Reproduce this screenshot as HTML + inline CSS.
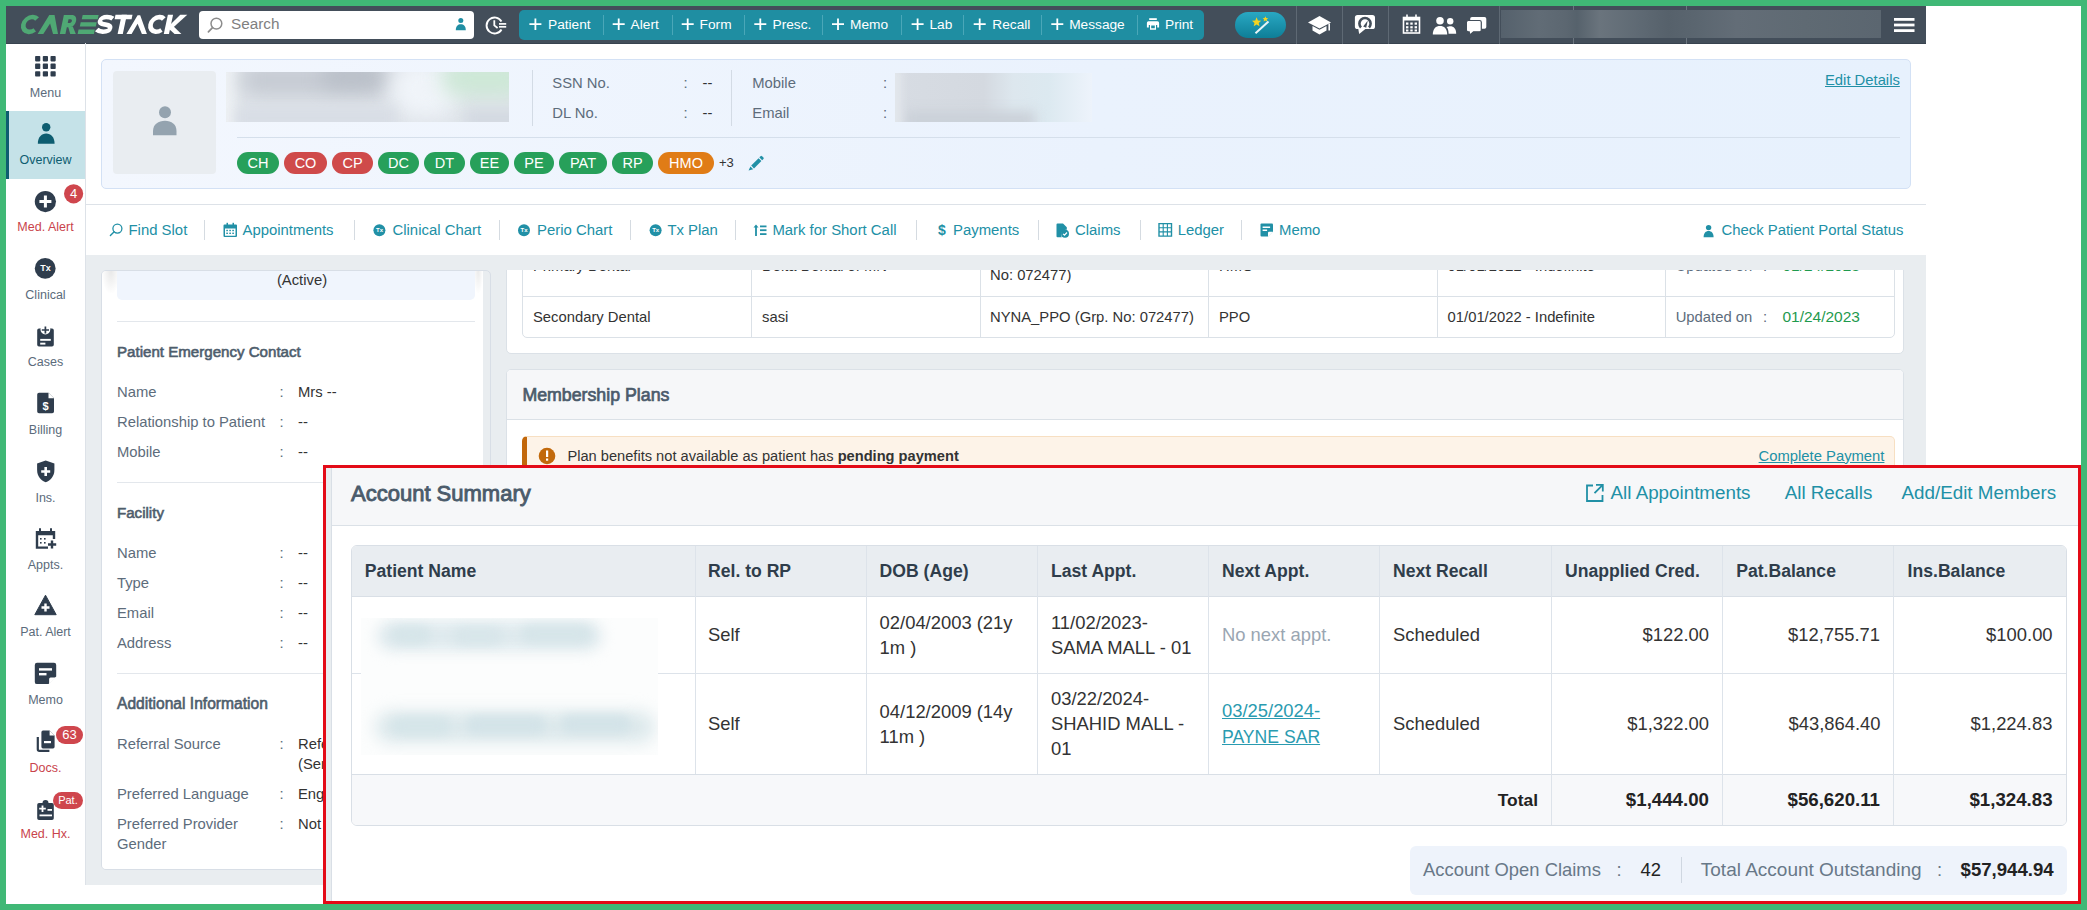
<!DOCTYPE html>
<html><head><meta charset="utf-8">
<style>
*{box-sizing:border-box;margin:0;padding:0}
html,body{width:2087px;height:910px;overflow:hidden}
body{position:relative;background:#40b876;font-family:"Liberation Sans",sans-serif;color:#333}
.a{position:absolute}
.t{position:absolute;white-space:nowrap;line-height:20px}
svg{position:absolute;overflow:visible}
#inner{left:6px;top:6px;width:2075px;height:898px;background:#fff}
#nav{left:6px;top:6px;width:1920px;height:38px;background:#434e5a;border-bottom:1px solid #38434f}
.vsep{position:absolute;width:1px;background:#5f6a75}
.nb{position:absolute;color:#fff;font-size:13.7px;line-height:20px;top:15px}
.bsep{position:absolute;top:15px;width:1px;height:20px;background:#4aa7b8}
.sl{position:absolute;left:6px;width:79px;text-align:center;font-size:12.5px;line-height:16px;color:#5b6b7b}
.red{color:#c9434b}
.pl{color:#5d6c7b;font-size:14.8px}
.pv{color:#333;font-size:14.8px}
.badge{position:absolute;top:152px;height:22px;border-radius:11px;color:#fff;font-size:14.5px;line-height:22px;text-align:center}
.g{background:#27a05a}.r{background:#cf4a4a}.o{background:#e07c16}
.tab{position:absolute;top:220px;font-size:14.9px;line-height:20px;color:#2190a6}
.tsep{position:absolute;top:220px;width:1px;height:20px;background:#d5dbe1}
.card{position:absolute;background:#fff;border:1px solid #d9dfe6;border-radius:4px}
.it{color:#333;font-size:14.8px}
.hd{font-weight:700;color:#2f3d4b;font-size:17.6px}
.cv{font-size:18.4px;color:#333}
.vl{position:absolute;width:1px;background:#dde3ea}
.hl{position:absolute;height:1px;background:#dde3ea}
</style></head><body>
<div class="a" id="inner"></div>
<!-- NAV -->
<div class="a" id="nav"></div>

<!-- logo -->
<svg class="a" style="left:0;top:0" width="200" height="45" viewBox="0 0 200 45">
<g transform="matrix(1,0,-0.2126,1,7.23,0)">
 <path d="M33.9,19.0 A7.45,7.45 0 1 0 33.9,29.9" fill="none" stroke="#4fa874" stroke-width="4.6"/>
 <path d="M37.6,33.9 L45.2,14.9 L50.5,14.9 L58,33.9 L53,33.9 L47.9,23.6 L43.3,33.9 Z" fill="#4fa874"/>
 <path d="M59.8,33.9 V14.9 H67.6 C71.4,14.9 73.3,17.6 73.3,21.1 C73.3,24.6 71.3,27.3 67.6,27.3 H65.4 V33.9 Z" fill="#4fa874"/>
 <path d="M65.4,19.3 H67.4 C68.6,19.3 69.1,20.1 69.1,21.1 C69.1,22.2 68.6,23.0 67.4,23.0 H65.4 Z" fill="#434e5a"/>
 <path d="M66.5,26.5 L71.2,26.5 L75.8,33.9 L70.2,33.9 Z" fill="#4fa874"/>
 <rect x="78.6" y="14.9" width="16" height="4.3" fill="#4fa874"/>
 <rect x="78.2" y="22.2" width="16" height="4.3" fill="#4fa874"/>
 <rect x="77.6" y="29.6" width="16.3" height="4.3" fill="#4fa874"/>
 <path d="M109.6,18.6 C107.6,17.5 105.5,17.1 103,17.1 C99.5,17.1 97.2,18.6 97.2,20.9 C97.2,23.5 100,24 103,24.4 C106.5,24.9 108.9,25.6 108.9,28.1 C108.9,30.6 106.5,31.8 102.6,31.8 C100,31.8 97.8,31.2 95.8,29.6" fill="none" stroke="#fff" stroke-width="4.5"/>
 <rect x="111.4" y="14.8" width="17" height="4.4" fill="#fff"/>
 <rect x="117.6" y="14.8" width="5.2" height="19.2" fill="#fff"/>
 <path d="M126.4,34 L133.6,15.2 L136.2,15.2 L146.9,34 L141.9,34 L135.4,23.8 L131.6,34 Z" fill="#fff"/>
 <path d="M160.6,18.9 A7.3,7.3 0 1 0 160.6,30.0" fill="none" stroke="#fff" stroke-width="4.6"/>
 <rect x="163.8" y="14.8" width="5.2" height="19.3" fill="#fff"/>
 <path d="M168.2,24.8 L176.2,14.8 L183.2,14.8 L169.4,30.2 Z" fill="#fff"/>
 <path d="M169.6,24.6 L181.4,34 L174.6,34 L167.4,28.6 Z" fill="#fff"/>
</g>
</svg>
<!-- search -->
<div class="a" style="left:199px;top:11px;width:275px;height:28px;background:#fff;border-radius:4px"></div>
<svg class="a" style="left:0;top:0" width="520" height="45">
 <circle cx="216.4" cy="23.6" r="5.4" fill="none" stroke="#8c8c8c" stroke-width="1.5"/>
 <line x1="212.5" y1="27.6" x2="208.4" y2="31.8" stroke="#8c8c8c" stroke-width="1.7" stroke-linecap="round"/>
 <circle cx="460.8" cy="20.6" r="2.5" fill="#1f8ea3"/>
 <path d="M455.8,30.2 C455.8,26.2 458,24.3 460.8,24.3 C463.6,24.3 465.8,26.2 465.8,30.2 Z" fill="#1f8ea3"/>
 <path d="M501.5,21.5 A8,8 0 1 0 501.5,29.5" fill="none" stroke="#fff" stroke-width="1.9"/>
 <path d="M494.3,20.2 V25.4 L497.6,28" fill="none" stroke="#fff" stroke-width="1.8"/>
 <line x1="499" y1="23.9" x2="506.2" y2="23.9" stroke="#fff" stroke-width="1.7"/>
 <line x1="499" y1="26.8" x2="506.2" y2="26.8" stroke="#fff" stroke-width="1.7"/>
</svg>
<div class="t" style="left:231px;top:14px;font-size:15.3px;line-height:20px;color:#808080">Search</div>
<!-- button group -->
<div class="a" style="left:519px;top:10px;width:685px;height:30px;background:#1f8ea2;border-radius:5px"></div>
<svg class="a" style="left:0;top:0" width="1210" height="45"><path d="M535.4,18.5 V30 M529.4,24.2 H541.4" stroke="#fff" stroke-width="1.8"/><path d="M618.7,18.5 V30 M612.7,24.2 H624.7" stroke="#fff" stroke-width="1.8"/><path d="M687.7,18.5 V30 M681.7,24.2 H693.7" stroke="#fff" stroke-width="1.8"/><path d="M760.3,18.5 V30 M754.3,24.2 H766.3" stroke="#fff" stroke-width="1.8"/><path d="M838.0,18.5 V30 M832.0,24.2 H844.0" stroke="#fff" stroke-width="1.8"/><path d="M917.6,18.5 V30 M911.6,24.2 H923.6" stroke="#fff" stroke-width="1.8"/><path d="M979.7,18.5 V30 M973.7,24.2 H985.7" stroke="#fff" stroke-width="1.8"/><path d="M1057.3,18.5 V30 M1051.3,24.2 H1063.3" stroke="#fff" stroke-width="1.8"/><rect x="1149.2" y="18.2" width="7.6" height="1.8" fill="#fff"/><path d="M1148.5,21.3 h9 a1.6,1.6 0 0 1 1.6,1.6 v4.6 h-1.9 v-2.4 h-8.4 v2.4 h-1.9 v-4.6 a1.6,1.6 0 0 1 1.6,-1.6z" fill="#fff"/><path d="M1150,25 h6 v4.8 h-6z M1151.2,25.6 v2.6 h3.6 v-2.6z" fill="#fff" fill-rule="evenodd"/></svg><div class="nb" style="left:548px">Patient</div><div class="bsep" style="left:602.6px"></div>
<div class="nb" style="left:630.6px">Alert</div><div class="bsep" style="left:671.6px"></div>
<div class="nb" style="left:699.6px">Form</div><div class="bsep" style="left:743.6px"></div>
<div class="nb" style="left:772.5px">Presc.</div><div class="bsep" style="left:822px"></div>
<div class="nb" style="left:850px">Memo</div><div class="bsep" style="left:901px"></div>
<div class="nb" style="left:929.5px">Lab</div><div class="bsep" style="left:963px"></div>
<div class="nb" style="left:992.3px">Recall</div><div class="bsep" style="left:1040.6px"></div>
<div class="nb" style="left:1069.2px">Message</div><div class="bsep" style="left:1136.5px"></div>
<div class="nb" style="left:1165px">Print</div>

<!-- wand -->
<div class="a" style="left:1235px;top:12px;width:51px;height:25.5px;border-radius:13px;background:linear-gradient(#29a8c3,#0e7e97)"></div>
<svg class="a" style="left:0;top:0" width="1930" height="45">
 <path d="M1256.6,17.3 l1.3,3.1 3.3,0.3 -2.5,2.2 0.8,3.3 -2.9,-1.8 -2.9,1.8 0.8,-3.3 -2.5,-2.2 3.3,-0.3z" fill="#f5d31f"/>
 <path d="M1265.4,16.2 l0.8,1.9 2,0.2 -1.5,1.3 0.5,2 -1.8,-1.1 -1.8,1.1 0.5,-2 -1.5,-1.3 2,-0.2z" fill="#f5d31f"/>
 <line x1="1255.5" y1="33.3" x2="1268.5" y2="21.5" stroke="#e8f4f7" stroke-width="2"/>
 <rect x="1296" y="6" width="1" height="38" fill="#5e6974"/>
 <rect x="1342" y="6" width="1" height="38" fill="#5e6974"/>
 <rect x="1388" y="6" width="1" height="38" fill="#5e6974"/>
 <rect x="1499" y="6" width="1" height="38" fill="#5e6974"/>
 <!-- grad cap -->
 <path d="M1308,22.4 L1319.5,16 L1331,22.4 L1319.5,28.6 Z" fill="#fff"/>
 <path d="M1312.5,26 V30.5 L1319.5,34.6 L1326.5,30.5 V26 L1319.5,29.8 Z" fill="#fff"/>
 <path d="M1329.2,23.4 V30.4" stroke="#fff" stroke-width="1.6"/>
 <!-- speedo chat -->
 <rect x="1354.9" y="14.9" width="20.1" height="14.2" rx="2.6" fill="#fff"/>
 <path d="M1358.2,28.5 L1359.2,34 L1366,28.5 Z" fill="#fff"/>
 <path d="M1361,27.5 A5.6,5.6 0 1 1 1369,27.5" fill="none" stroke="#434e5a" stroke-width="2.6"/>
 <path d="M1363.2,26.4 L1367.8,20.6 L1366.2,27.8 Z" fill="#434e5a"/>
 <!-- calendar -->
 <rect x="1403.5" y="17.5" width="16" height="15.5" fill="none" stroke="#fff" stroke-width="1.6"/>
 <rect x="1403" y="17" width="17" height="3.5" fill="#fff"/>
 <path d="M1407,14.6 V18 M1416,14.6 V18" stroke="#fff" stroke-width="1.6"/>
 <g fill="#fff"><rect x="1406" y="22.5" width="2.4" height="2.2"/><rect x="1410.3" y="22.5" width="2.4" height="2.2"/><rect x="1414.6" y="22.5" width="2.4" height="2.2"/><rect x="1406" y="26.2" width="2.4" height="2.2"/><rect x="1410.3" y="26.2" width="2.4" height="2.2"/><rect x="1414.6" y="26.2" width="2.4" height="2.2"/><rect x="1406" y="29.5" width="2.4" height="2"/><rect x="1410.3" y="29.5" width="2.4" height="2"/><rect x="1414.6" y="29.5" width="2.4" height="2"/></g>
 <!-- people -->
 <circle cx="1440" cy="20.8" r="3.8" fill="#fff"/>
 <path d="M1432.8,34.5 C1432.8,28.5 1436,26 1440,26 C1444,26 1447.2,28.5 1447.2,34.5Z" fill="#fff"/>
 <circle cx="1450.2" cy="21.3" r="3.2" fill="#fff"/>
 <path d="M1448.8,26.4 C1453.5,25.8 1456.2,28.5 1456.2,33.8 H1448.6 C1448.6,30.5 1447.8,28 1446.5,27Z" fill="#fff"/>
 <!-- chats -->
 <path d="M1472,17 H1484.5 a1.8,1.8 0 0 1 1.8,1.8 V27 a1.8,1.8 0 0 1 -1.8,1.8 H1472 a1.8,1.8 0 0 1 -1.8,-1.8 V18.8 a1.8,1.8 0 0 1 1.8,-1.8z" fill="#fff"/>
 <path d="M1468.2,20.5 H1479.5 a1.8,1.8 0 0 1 1.8,1.8 V30 a1.8,1.8 0 0 1 -1.8,1.8 H1473.5 L1469.8,35 L1469.2,31.8 H1468.2 a1.8,1.8 0 0 1 -1.8,-1.8 V22.3 a1.8,1.8 0 0 1 1.8,-1.8z" fill="#fff" stroke="#434e5a" stroke-width="1.2"/>
 <!-- hamburger -->
 <rect x="1894" y="18" width="20.5" height="2.8" fill="#fff"/>
 <rect x="1894" y="23.6" width="20.5" height="2.8" fill="#fff"/>
 <rect x="1894" y="29.2" width="20.5" height="2.8" fill="#fff"/>
</svg>
<div class="a" style="left:1501px;top:10px;width:380px;height:28px;background:linear-gradient(90deg,#55616c 0%,#616c76 10%,#5c6771 17%,#56626c 20%,#6a747d 26%,#5f6a74 36%,#56616b 44%,#5b6670 52%,#636d77 62%,#5f6a73 80%,#5b6670 100%)"></div>
<div class="a" style="left:1573px;top:6px;width:1px;height:4px;background:#6c7680"></div>
<div class="a" style="left:1573px;top:38px;width:1px;height:5.5px;background:#6c7680"></div>
<div class="a" style="left:1686px;top:6px;width:1px;height:4px;background:#6c7680"></div>
<div class="a" style="left:1686px;top:38px;width:1px;height:5.5px;background:#6c7680"></div>

<!-- SIDEBAR -->
<div class="a" style="left:85px;top:43px;width:1px;height:842px;background:#dde2e8"></div>
<div class="a" style="left:6px;top:111px;width:79px;height:68px;background:#c5e2e8"></div>
<div class="a" style="left:6px;top:111px;width:2.5px;height:68px;background:#0e5d70"></div>
<svg class="a" style="left:0;top:0" width="90" height="904">
 <g fill="#2f3d4d"><rect x="35.1" y="56" width="5.2" height="5.4" rx="0.8"/><rect x="42.8" y="56" width="5.2" height="5.4" rx="0.8"/><rect x="50.5" y="56" width="5.2" height="5.4" rx="0.8"/><rect x="35.1" y="63.6" width="5.2" height="5.4" rx="0.8"/><rect x="42.8" y="63.6" width="5.2" height="5.4" rx="0.8"/><rect x="50.5" y="63.6" width="5.2" height="5.4" rx="0.8"/><rect x="35.1" y="71.2" width="5.2" height="5.4" rx="0.8"/><rect x="42.8" y="71.2" width="5.2" height="5.4" rx="0.8"/><rect x="50.5" y="71.2" width="5.2" height="5.4" rx="0.8"/></g>
 <circle cx="46.2" cy="127.2" r="4.2" fill="#0e5d70"/>
 <path d="M37.8,143.8 C37.8,137 41.5,133.4 46.2,133.4 C50.9,133.4 54.6,137 54.6,143.8 Z" fill="#0e5d70"/>
 <!-- med alert -->
 <circle cx="45.4" cy="201.6" r="10.6" fill="#2f3d4d"/>
 <path d="M45.4,195.6 V207.6 M39.4,201.6 H51.4" stroke="#fff" stroke-width="3"/>
 <circle cx="73.6" cy="193.8" r="9.6" fill="#cf464d"/>
 <!-- clinical -->
 <circle cx="45.2" cy="268.4" r="10.4" fill="#2f3d4d"/>
 <!-- cases -->
 <path d="M39,328.5 h3.5 a3,3 0 0 0 6,0 h3.5 a1.8,1.8 0 0 1 1.8,1.8 v14.4 a1.8,1.8 0 0 1 -1.8,1.8 h-13 a1.8,1.8 0 0 1 -1.8,-1.8 v-14.4 a1.8,1.8 0 0 1 1.8,-1.8z" fill="#2f3d4d"/>
 <circle cx="45.4" cy="329.6" r="4.9" fill="#fff"/>
 <path d="M45.4,326.4 V333.6 M41.8,330 H49" stroke="#2f3d4d" stroke-width="1.7"/>
 <rect x="40.2" y="338.9" width="10.6" height="1.9" fill="#fff"/>
 <rect x="40.2" y="342.7" width="5.2" height="1.9" fill="#fff"/>
 <!-- billing -->
 <path d="M39,392.8 h9.5 l5.5,5.5 v13.2 a1.8,1.8 0 0 1 -1.8,1.8 h-13.2 a1.8,1.8 0 0 1 -1.8,-1.8 v-16.9 a1.8,1.8 0 0 1 1.8,-1.8z" fill="#2f3d4d"/>
 <path d="M48.5,392.8 v5.5 h5.5z" fill="#fff"/>
 <!-- ins shield -->
 <path d="M45.7,460.4 L54.4,463.6 V470 C54.4,476.2 50.6,480.4 45.7,482.3 C40.8,480.4 37.1,476.2 37.1,470 V463.6 Z" fill="#2f3d4d"/>
 <path d="M45.7,467 V476 M41.2,471.5 H50.2" stroke="#fff" stroke-width="2.6"/>
 <!-- appts -->
 <path d="M36.2,531 h18.6 v4.2 h-18.6z" fill="#2f3d4d"/>
 <path d="M40,528.3 v4 M51,528.3 v4" stroke="#2f3d4d" stroke-width="2"/>
 <path d="M48,547.6 H37 V531 M54,531 V539" fill="none" stroke="#2f3d4d" stroke-width="2.4"/>
 <g fill="#2f3d4d"><rect x="40" y="538" width="1.6" height="1.6"/><rect x="44" y="538" width="1.6" height="1.6"/><rect x="40" y="542" width="1.6" height="1.6"/><rect x="44" y="542" width="1.6" height="1.6"/></g>
 <path d="M52,540.5 V548.6 M48,544.5 H56.2" stroke="#2f3d4d" stroke-width="2.4"/>
 <!-- pat alert triangle -->
 <path d="M45.5,595.2 L56.2,614.7 H34.8 Z" fill="#2f3d4d" stroke="#2f3d4d" stroke-width="1" stroke-linejoin="round"/>
 <path d="M45.5,603.5 V611.5 M41.5,607.5 H49.5" stroke="#fff" stroke-width="2.4"/>
 <!-- memo -->
 <path d="M37,662.7 h17 a2.2,2.2 0 0 1 2.2,2.2 v11.5 l-7.7,7.7 h-11.5 a2.2,2.2 0 0 1 -2.2,-2.2 v-17 a2.2,2.2 0 0 1 2.2,-2.2z" fill="#2f3d4d"/>
 <rect x="39" y="668.2" width="13" height="2.4" fill="#fff"/>
 <rect x="39" y="673" width="7.5" height="2.4" fill="#fff"/>
 <path d="M56.2,677.5 h-5.6 a1.5,1.5 0 0 0 -1.5,1.5 v5.1z" fill="#fff"/>
 <!-- docs -->
 <path d="M37.8,737 v12.2 a1.6,1.6 0 0 0 1.6,1.6 h10" fill="none" stroke="#2f3d4d" stroke-width="2.2"/>
 <path d="M43,730.6 h6.6 l5,5 v11.2 a1.6,1.6 0 0 1 -1.6,1.6 h-10 a1.6,1.6 0 0 1 -1.6,-1.6 v-14.6 a1.6,1.6 0 0 1 1.6,-1.6z" fill="#2f3d4d"/>
 <rect x="44" y="741" width="7" height="2.2" fill="#fff"/>
 <path d="M49.6,730.6 v5 h5z" fill="#fff"/>
 <!-- med hx -->
 <path d="M39,803 h3.5 a3,3 0 0 1 6,0 h3.5 a1.8,1.8 0 0 1 1.8,1.8 v13.4 a1.8,1.8 0 0 1 -1.8,1.8 h-13 a1.8,1.8 0 0 1 -1.8,-1.8 v-13.4 a1.8,1.8 0 0 1 1.8,-1.8z" fill="#2f3d4d"/>
 <path d="M42.5,805.5 V812 M39.2,808.7 H45.8" stroke="#fff" stroke-width="1.8"/>
 <rect x="47.5" y="809" width="4.5" height="1.8" fill="#fff"/>
 <rect x="39.5" y="814.5" width="12.5" height="1.8" fill="#fff"/>
</svg>
<div class="t" style="left:66px;top:185px;width:15px;text-align:center;color:#fff;font-size:13px;line-height:18px">4</div>
<div class="t" style="left:35px;top:262px;width:21px;text-align:center;color:#fff;font-size:9px;font-weight:700;line-height:12px">Tx</div>
<div class="t" style="left:36px;top:399px;width:19px;text-align:center;color:#fff;font-size:11px;font-weight:700;line-height:14px">$</div>
<div class="a" style="left:56px;top:726px;width:27px;height:17.5px;border-radius:9px;background:#cf464d;color:#fff;font-size:13px;line-height:17.5px;text-align:center">63</div>
<div class="a" style="left:53.2px;top:792.4px;width:29.5px;height:16.8px;border-radius:8.5px;background:#cf464d;color:#fff;font-size:11px;line-height:16.8px;text-align:center">Pat.</div>
<div class="sl" style="top:84.7px">Menu</div>
<div class="sl" style="top:151.8px;color:#0e5d70">Overview</div>
<div class="sl red" style="top:219.2px">Med. Alert</div>
<div class="sl" style="top:286.6px">Clinical</div>
<div class="sl" style="top:354.0px">Cases</div>
<div class="sl" style="top:421.5px">Billing</div>
<div class="sl" style="top:489.5px">Ins.</div>
<div class="sl" style="top:556.5px">Appts.</div>
<div class="sl" style="top:624.0px">Pat. Alert</div>
<div class="sl" style="top:691.5px">Memo</div>
<div class="sl red" style="top:759.5px">Docs.</div>
<div class="sl red" style="top:826.3px">Med. Hx.</div>

<!-- PATIENT CARD -->
<div class="a" style="left:101px;top:59px;width:1810px;height:130px;border:1px solid #d3e1f5;border-radius:5px;background:linear-gradient(90deg,#f3f7fe,#eaf2fd 55%,#e7f1fd)"></div>
<div class="a" style="left:113px;top:70.5px;width:103px;height:103.5px;background:#e9edf1;border-radius:4px"></div>
<svg class="a" style="left:0;top:0" width="1930" height="260">
 <circle cx="165" cy="112.2" r="6" fill="#94a3af"/>
 <path d="M153,135.3 V131 C153,124.5 158.5,120.8 165,120.8 C171.5,120.8 176.5,124.5 176.5,131 V135.3 Z" fill="#94a3af"/>
 <path d="M751.2,165.6 L758.6,158.2 L761.4,161 L754,168.4 Z" fill="#2190a6" transform="translate(0,0)"/>
 <path d="M759.4,157.4 L760.6,156.2 a1,1 0 0 1 1.4,0 l1.4,1.4 a1,1 0 0 1 0,1.4 L762.2,160.2 Z" fill="#2190a6"/>
 <path d="M750.4,166.4 L753.2,169.2 L748.6,170.6 Z" fill="#2190a6"/>
</svg>
<div class="a" style="left:226px;top:72px;width:283px;height:50px;overflow:hidden;background:#dfe4ea">
 <div class="a" style="left:-10px;top:-10px;width:20px;height:70px;background:#eef1f4;filter:blur(6px)"></div>
 <div class="a" style="left:15px;top:-8px;width:150px;height:32px;background:#c6cbd3;border-radius:15px;filter:blur(9px)"></div>
 <div class="a" style="left:95px;top:-8px;width:60px;height:24px;background:#b9bfc8;border-radius:13px;filter:blur(9px)"></div>
 <div class="a" style="left:165px;top:-10px;width:70px;height:55px;background:#f0f4f9;border-radius:30px;filter:blur(10px)"></div>
 <div class="a" style="left:215px;top:-12px;width:90px;height:36px;background:#cde8d6;border-radius:20px;filter:blur(10px)"></div>
 <div class="a" style="left:10px;top:36px;width:160px;height:20px;background:#d8dde5;filter:blur(6px)"></div>
 <div class="a" style="left:240px;top:38px;width:60px;height:20px;background:#d3d9e1;filter:blur(6px)"></div>
</div>
<div class="a" style="left:532px;top:70px;width:1px;height:56px;background:#d3dbe5"></div>
<div class="a" style="left:731px;top:70px;width:1px;height:56px;background:#d3dbe5"></div>
<div class="t pl" style="left:552.3px;top:72.7px">SSN No.</div>
<div class="t pl" style="left:552.3px;top:103px">DL No.</div>
<div class="t pl" style="left:683.5px;top:72.7px">:</div>
<div class="t pl" style="left:683.5px;top:103px">:</div>
<div class="t pv" style="left:702.5px;top:72.7px">--</div>
<div class="t pv" style="left:702.5px;top:103px">--</div>
<div class="t pl" style="left:752.3px;top:72.7px">Mobile</div>
<div class="t pl" style="left:752.3px;top:103px">Email</div>
<div class="t pl" style="left:883px;top:72.7px">:</div>
<div class="t pl" style="left:883px;top:103px">:</div>
<div class="a" style="left:895px;top:73px;width:197px;height:49px;overflow:hidden;background:linear-gradient(90deg,#d7dce3 0%,#d4d9e0 45%,#dde7ee 60%,#dce9f0 78%,#edf3fb 100%)">
 <div class="a" style="left:10px;top:38px;width:130px;height:20px;background:#cbd1d9;filter:blur(6px)"></div>
 <div class="a" style="left:-8px;top:-5px;width:14px;height:60px;background:#e4e8ed;filter:blur(5px)"></div>
</div>
<div class="a" style="left:237px;top:137px;width:1663px;height:1px;background:#d5dfeb"></div>
<div class="t" style="left:1825px;top:69.6px;font-size:14.8px;color:#2190a6;text-decoration:underline">Edit Details</div>
<div class="badge g" style="left:237px;width:42px">CH</div>
<div class="badge r" style="left:284px;width:43px">CO</div>
<div class="badge r" style="left:332px;width:41px">CP</div>
<div class="badge g" style="left:378px;width:41px">DC</div>
<div class="badge g" style="left:424px;width:41px">DT</div>
<div class="badge g" style="left:470px;width:39px">EE</div>
<div class="badge g" style="left:514px;width:40px">PE</div>
<div class="badge g" style="left:559px;width:48px">PAT</div>
<div class="badge g" style="left:612px;width:41px">RP</div>
<div class="badge o" style="left:658px;width:56px">HMO</div>
<div class="t" style="left:719px;top:153px;font-size:13px;color:#333">+3</div>

<!-- TABS -->
<div class="a" style="left:86px;top:204px;width:1840px;height:1px;background:#dde2e8"></div>
<div class="tab" style="left:128.5px">Find Slot</div>
<div class="tab" style="left:242.5px">Appointments</div>
<div class="tab" style="left:392.5px">Clinical Chart</div>
<div class="tab" style="left:537px">Perio Chart</div>
<div class="tab" style="left:667.4px">Tx Plan</div>
<div class="tab" style="left:772.4px">Mark for Short Call</div>
<div class="tab" style="left:953px">Payments</div>
<div class="tab" style="left:1075px">Claims</div>
<div class="tab" style="left:1177.7px">Ledger</div>
<div class="tab" style="left:1279px">Memo</div>
<div class="tab" style="left:1721.4px">Check Patient Portal Status</div>
<div class="tsep" style="left:204px"></div>
<div class="tsep" style="left:354px"></div>
<div class="tsep" style="left:498.5px"></div>
<div class="tsep" style="left:629.7px"></div>
<div class="tsep" style="left:734.5px"></div>
<div class="tsep" style="left:915.7px"></div>
<div class="tsep" style="left:1037.5px"></div>
<div class="tsep" style="left:1139.8px"></div>
<div class="tsep" style="left:1241px"></div>

<svg class="a" style="left:0;top:0" width="1930" height="260">
 <g fill="#2190a6" stroke="none">
 <circle cx="117.4" cy="228.6" r="4.5" fill="none" stroke="#2190a6" stroke-width="1.3"/>
 <path d="M114.2,231.8 L110.4,235.6" stroke="#2190a6" stroke-width="1.4" stroke-linecap="round"/>
 <path d="M224.5,224.5 h11.5 a1,1 0 0 1 1,1 v10.5 a1,1 0 0 1 -1,1 h-11.5 a1,1 0 0 1 -1,-1 v-10.5 a1,1 0 0 1 1,-1z M225,228.4 v7.3 h10.5 v-7.3z"/>
 <rect x="226.5" y="222.8" width="1.5" height="3"/><rect x="232.5" y="222.8" width="1.5" height="3"/>
 <g><rect x="226.3" y="229.8" width="1.6" height="1.4"/><rect x="229.3" y="229.8" width="1.6" height="1.4"/><rect x="232.3" y="229.8" width="1.6" height="1.4"/><rect x="226.3" y="232.6" width="1.6" height="1.4"/><rect x="229.3" y="232.6" width="1.6" height="1.4"/><rect x="232.3" y="232.6" width="1.6" height="1.4"/></g>
 <circle cx="379.4" cy="230.2" r="6"/>
 <circle cx="524" cy="230.2" r="6"/>
 <circle cx="655.6" cy="230.2" r="6"/>
 <!-- mark for short call -->
 <path d="M756,224.5 L758.5,227.5 H756.9 V236 H755.1 V227.5 H753.5Z"/>
 <rect x="760" y="225.5" width="6.5" height="1.8"/><rect x="760" y="229.3" width="6.5" height="1.8"/><rect x="760" y="233.2" width="6.5" height="1.8"/>
 <!-- claims -->
 <path d="M1057.5,223.5 h5.5 l3.8,3.8 v2.5 a5,5 0 0 0 -5,7.5 h-4.3 a1,1 0 0 1 -1,-1 v-11.8 a1,1 0 0 1 1,-1z"/>
 <circle cx="1065" cy="233.8" r="4"/>
 <path d="M1063.1,233.8 L1064.5,235.2 L1067,232.5" stroke="#fff" stroke-width="1.2" fill="none"/>
 <!-- ledger -->
 <path d="M1159,223.6 h12.5 v12.5 h-12.5z" fill="none" stroke="#2190a6" stroke-width="1.4"/>
 <path d="M1159,227.8 h12.5 M1159,231.9 h12.5 M1163.2,223.6 v12.5 M1167.4,223.6 v12.5" stroke="#2190a6" stroke-width="1.1"/>
 <!-- memo -->
 <path d="M1261.5,223.5 h10.5 a1,1 0 0 1 1,1 v7 l-5,5 h-6.5 a1,1 0 0 1 -1,-1 v-11 a1,1 0 0 1 1,-1z"/>
 <rect x="1262.6" y="226.5" width="7.5" height="1.5" fill="#fff"/><rect x="1262.6" y="229.5" width="4.5" height="1.5" fill="#fff"/>
 <path d="M1273,231.8 h-4 a1,1 0 0 0 -1,1 v4z" fill="#fff"/>
 <!-- person -->
 <circle cx="1708.6" cy="227.6" r="2.7"/>
 <path d="M1703.6,237.2 C1703.6,233 1705.8,231 1708.6,231 C1711.4,231 1713.6,233 1713.6,237.2Z"/>
 </g>
</svg>
<div class="t" style="left:370px;top:225.5px;width:19px;text-align:center;color:#fff;font-size:6px;font-weight:700;line-height:9px">Tx</div>
<div class="t" style="left:514.6px;top:225.5px;width:19px;text-align:center;color:#fff;font-size:6px;font-weight:700;line-height:9px">Tx</div>
<div class="t" style="left:646.2px;top:225.5px;width:19px;text-align:center;color:#fff;font-size:6px;font-weight:700;line-height:9px">Tx</div>
<div class="t" style="left:938px;top:220px;font-size:14px;color:#2190a6;font-weight:700">$</div>

<!-- CONTENT GRAY -->
<div class="a" style="left:86px;top:255px;width:1840px;height:630px;background:#e9edf0"></div>
<div class="a" style="left:0;top:0;width:2087px;height:910px;clip-path:inset(270px 0 0 0)">
<!-- LEFT CARD -->
<div class="a" style="left:101px;top:270px;width:390px;height:600px;background:#e9edf0;border:1px solid #d8dee6;border-radius:5px"></div>
<div class="a" style="left:102px;top:271px;width:381px;height:598px;background:#fff;border-radius:4px 0 0 4px"></div>
<div class="a" style="left:102px;top:271px;width:15px;height:22px;background:radial-gradient(ellipse at 60% 0%,rgba(0,0,0,.09),rgba(0,0,0,0) 75%);border-radius:4px 0 0 0"></div>
<div class="a" style="left:475px;top:271px;width:8px;height:22px;background:radial-gradient(ellipse at 40% 0%,rgba(0,0,0,.08),rgba(0,0,0,0) 75%)"></div>
<div class="a" style="left:117px;top:271px;width:358px;height:29px;background:#f0f5fd;border-radius:0 0 5px 5px"></div>
<div class="t it" style="left:117px;top:269.6px;width:358px;text-align:center;padding-left:12px">(Active)</div>
<div class="a" style="left:117px;top:320.5px;width:358px;height:1px;background:#e3e7ec"></div>
<div class="a" style="left:117px;top:482px;width:358px;height:1px;background:#e3e7ec"></div>
<div class="a" style="left:117px;top:673px;width:358px;height:1px;background:#e3e7ec"></div>
<div class="t" style="left:117px;top:342.0px;font-size:15.1px;-webkit-text-stroke:0.6px #4e5d6c;color:#4e5d6c">Patient Emergency Contact</div>
<div class="t pl" style="left:117px;top:382.0px">Name</div><div class="t pl" style="left:279.5px;top:382.0px">:</div><div class="t pv" style="left:298px;top:382.0px">Mrs --</div>
<div class="t pl" style="left:117px;top:411.5px">Relationship to Patient</div><div class="t pl" style="left:279.5px;top:411.5px">:</div><div class="t pv" style="left:298px;top:411.5px">--</div>
<div class="t pl" style="left:117px;top:441.5px">Mobile</div><div class="t pl" style="left:279.5px;top:441.5px">:</div><div class="t pv" style="left:298px;top:441.5px">--</div>
<div class="t" style="left:117px;top:502.7px;font-size:15.1px;-webkit-text-stroke:0.6px #4e5d6c;color:#4e5d6c">Facility</div>
<div class="t pl" style="left:117px;top:542.7px">Name</div><div class="t pl" style="left:279.5px;top:542.7px">:</div><div class="t pv" style="left:298px;top:542.7px">--</div>
<div class="t pl" style="left:117px;top:572.7px">Type</div><div class="t pl" style="left:279.5px;top:572.7px">:</div><div class="t pv" style="left:298px;top:572.7px">--</div>
<div class="t pl" style="left:117px;top:602.6px">Email</div><div class="t pl" style="left:279.5px;top:602.6px">:</div><div class="t pv" style="left:298px;top:602.6px">--</div>
<div class="t pl" style="left:117px;top:632.7px">Address</div><div class="t pl" style="left:279.5px;top:632.7px">:</div><div class="t pv" style="left:298px;top:632.7px">--</div>
<div class="t" style="left:117px;top:693.7px;font-size:15.6px;-webkit-text-stroke:0.6px #4e5d6c;color:#4e5d6c">Additional Information</div>
<div class="t pl" style="left:117px;top:734.0px">Referral Source</div><div class="t pl" style="left:279.5px;top:734.0px">:</div><div class="t pv" style="left:298px;top:734.0px">Referral</div>
<div class="t pv" style="left:298px;top:754px">(Service)</div>
<div class="t pl" style="left:117px;top:784.0px">Preferred Language</div><div class="t pl" style="left:279.5px;top:784.0px">:</div><div class="t pv" style="left:298px;top:784.0px">English</div>
<div class="t pl" style="left:117px;top:813.7px">Preferred Provider</div><div class="t pl" style="left:279.5px;top:813.7px">:</div><div class="t pv" style="left:298px;top:813.7px">Not Specified</div>
<div class="t pl" style="left:117px;top:833.6px">Gender</div>

<!-- INSURANCE CARD -->
<div class="a" style="left:505.5px;top:240px;width:1398.5px;height:113.5px;background:#fff;border:1px solid #dbe1e7;border-radius:5px"></div>
<div class="a" style="left:521.5px;top:230px;width:1373px;height:107.5px;border:1px solid #dbe1e7;border-radius:5px"></div>
<div class="a" style="left:521.5px;top:296px;width:1373px;height:1px;background:#dbe1e7"></div>
<div class="a" style="left:751px;top:230px;width:1px;height:107px;background:#dbe1e7"></div>
<div class="a" style="left:980px;top:230px;width:1px;height:107px;background:#dbe1e7"></div>
<div class="a" style="left:1208px;top:230px;width:1px;height:107px;background:#dbe1e7"></div>
<div class="a" style="left:1437px;top:230px;width:1px;height:107px;background:#dbe1e7"></div>
<div class="a" style="left:1665px;top:230px;width:1px;height:107px;background:#dbe1e7"></div>
<div class="t it" style="left:533px;top:256px">Primary Dental</div>
<div class="t it" style="left:762px;top:256px">Delta Dental of MN</div>
<div class="t it" style="left:1219px;top:256px">HMO</div>
<div class="t it" style="left:1447.6px;top:256px">01/01/2022 - Indefinite</div>
<div class="t it" style="left:990px;top:245px">NYNA_PPO (Grp.</div><div class="t it" style="left:990px;top:265px">No: 072477)</div>
<div class="t pl" style="left:1675.7px;top:256px">Updated on</div><div class="t pl" style="left:1763px;top:256px">:</div><div class="t" style="left:1782.4px;top:256px;font-size:15.5px;color:#1f9a4e">01/24/2023</div>
<div class="t it" style="left:533px;top:306.5px">Secondary Dental</div>
<div class="t it" style="left:762px;top:306.5px">sasi</div>
<div class="t it" style="left:990px;top:306.5px">NYNA_PPO (Grp. No: 072477)</div>
<div class="t it" style="left:1219px;top:306.5px">PPO</div>
<div class="t it" style="left:1447.6px;top:306.5px">01/01/2022 - Indefinite</div>
<div class="t pl" style="left:1675.7px;top:306.5px">Updated on</div><div class="t pl" style="left:1763px;top:306.5px">:</div><div class="t" style="left:1782.4px;top:306.5px;font-size:15.5px;color:#1f9a4e">01/24/2023</div>
</div>

<!-- MEMBERSHIP -->
<div class="a" style="left:505.5px;top:368.5px;width:1398.5px;height:520px;background:#fff;border:1px solid #dbe1e7;border-radius:5px;overflow:hidden">
 <div class="a" style="left:0;top:0;width:100%;height:50px;background:#f6f7f9;border-bottom:1px solid #dbe1e7"></div>
</div>
<div class="t" style="left:522.4px;top:384.5px;font-size:17.75px;-webkit-text-stroke:0.7px #4b5b6b;color:#4b5b6b">Membership Plans</div>
<div class="a" style="left:521.5px;top:436px;width:1373px;height:60px;background:#fdf3e8;border:1px solid #f7dfc2;border-left:5px solid #c2670b;border-radius:5px"></div>
<svg class="a" style="left:0;top:0" width="600" height="500"><circle cx="547" cy="456" r="8.3" fill="#c2690b"/><rect x="546" y="450.5" width="2.2" height="6.5" fill="#fff"/><rect x="546" y="458.5" width="2.2" height="2.2" fill="#fff"/></svg>
<div class="t" style="left:567.4px;top:446px;font-size:14.65px;color:#333">Plan benefits not available as patient has <b>pending payment</b></div>
<div class="t" style="left:1758.6px;top:445.5px;font-size:14.8px;color:#2190a6;text-decoration:underline">Complete Payment</div>
<!-- bottom white -->
<div class="a" style="left:86px;top:885px;width:1840px;height:19px;background:#fff"></div>

<!-- ACCOUNT SUMMARY OVERLAY -->
<div class="a" style="left:323px;top:465px;width:1758px;height:439px;border:3px solid #e30b17;background:#fff;overflow:hidden">
 <div class="a" style="left:0;top:0;width:6px;height:100%;background:#e9edf0;border-right:1px solid #d9dfe6"></div>
 <div class="a" style="left:6px;top:0;width:1746px;height:58px;background:#f6f7f9;border-bottom:1px solid #dbe1e7"></div>
</div>
<div class="t" style="left:351px;top:482px;font-size:22px;line-height:24px;-webkit-text-stroke:0.9px #4b5b6b;color:#4b5b6b">Account Summary</div>
<svg class="a" style="left:0;top:0" width="2087" height="910">
 <path d="M1593,485.5 h-6 v15.5 h15.5 v-6" fill="none" stroke="#2190a6" stroke-width="1.8"/>
 <path d="M1596,484.8 h6.8 v6.8 M1602.5,485.2 L1594.5,493.2" fill="none" stroke="#2190a6" stroke-width="1.8"/>
</svg>
<div class="t" style="left:1610.6px;top:481px;font-size:18.8px;line-height:24px;color:#2190a6">All Appointments</div>
<div class="t" style="left:1784.7px;top:481px;font-size:18.8px;line-height:24px;color:#2190a6">All Recalls</div>
<div class="t" style="left:1901.6px;top:481px;font-size:18.8px;line-height:24px;color:#2190a6">Add/Edit Members</div>
<!-- table -->
<div class="a" style="left:351px;top:545px;width:1716px;height:281px;border:1px solid #d9dfe6;border-radius:6px;overflow:hidden;background:#fff">
 <div class="a" style="left:0;top:0;width:100%;height:51px;background:#e9edf1;border-bottom:1px solid #d9dfe6"></div>
 <div class="a" style="left:0;top:228px;width:100%;height:52px;background:#f7f8fa;border-top:1px solid #d9dfe6"></div>
 <div class="a" style="left:0;top:127px;width:100%;height:1px;background:#dde3ea"></div>
</div>
<div class="a" style="left:695px;top:546px;width:1px;height:228px;background:#dde3ea"></div>
<div class="a" style="left:866px;top:546px;width:1px;height:228px;background:#dde3ea"></div>
<div class="a" style="left:1037px;top:546px;width:1px;height:228px;background:#dde3ea"></div>
<div class="a" style="left:1208px;top:546px;width:1px;height:228px;background:#dde3ea"></div>
<div class="a" style="left:1379px;top:546px;width:1px;height:228px;background:#dde3ea"></div>
<div class="a" style="left:1551px;top:546px;width:1px;height:279px;background:#dde3ea"></div>
<div class="a" style="left:1722px;top:546px;width:1px;height:279px;background:#dde3ea"></div>
<div class="a" style="left:1893px;top:546px;width:1px;height:279px;background:#dde3ea"></div>

<div class="a" style="left:361px;top:618px;width:297px;height:137px;background:#fcfdfd"></div>
<div class="a" style="left:361px;top:618px;width:297px;height:137px;overflow:hidden">
 <div class="a" style="left:16px;top:3px;width:225px;height:30px;background:#dfeaee;border-radius:15px;filter:blur(7px)"></div>
 <div class="a" style="left:30px;top:8px;width:40px;height:18px;background:#d6e5e9;border-radius:9px;filter:blur(5px)"></div>
 <div class="a" style="left:92px;top:9px;width:50px;height:18px;background:#d8e6ea;border-radius:9px;filter:blur(5px)"></div>
 <div class="a" style="left:160px;top:7px;width:70px;height:18px;background:#d6e5e9;border-radius:9px;filter:blur(5px)"></div>
 <div class="a" style="left:14px;top:93px;width:280px;height:32px;background:#dde9ec;border-radius:16px;filter:blur(8px)"></div>
 <div class="a" style="left:30px;top:99px;width:60px;height:18px;background:#d5e5e9;border-radius:9px;filter:blur(5px)"></div>
 <div class="a" style="left:105px;top:98px;width:80px;height:18px;background:#d3e3e8;border-radius:9px;filter:blur(5px)"></div>
 <div class="a" style="left:200px;top:97px;width:70px;height:18px;background:#d3e3e8;border-radius:9px;filter:blur(5px)"></div>
</div>
<div class="t hd" style="left:364.8px;top:558.8px;line-height:24px">Patient Name</div>
<div class="t hd" style="left:708px;top:558.8px;line-height:24px">Rel. to RP</div>
<div class="t hd" style="left:879.6px;top:558.8px;line-height:24px">DOB (Age)</div>
<div class="t hd" style="left:1051px;top:558.8px;line-height:24px">Last Appt.</div>
<div class="t hd" style="left:1222px;top:558.8px;line-height:24px">Next Appt.</div>
<div class="t hd" style="left:1393px;top:558.8px;line-height:24px">Next Recall</div>
<div class="t hd" style="left:1565px;top:558.8px;line-height:24px">Unapplied Cred.</div>
<div class="t hd" style="left:1736.2px;top:558.8px;line-height:24px">Pat.Balance</div>
<div class="t hd" style="left:1907.6px;top:558.8px;line-height:24px">Ins.Balance</div>
<div class="t cv" style="left:708px;top:623.2px;line-height:24px;">Self</div>
<div class="t cv" style="left:879.6px;top:610.9px;line-height:24px;">02/04/2003 (21y</div>
<div class="t cv" style="left:879.6px;top:636.2px;line-height:24px;">1m )</div>
<div class="t cv" style="left:1051px;top:610.6px;line-height:24px;">11/02/2023-</div>
<div class="t cv" style="left:1051px;top:636.4px;line-height:24px;">SAMA MALL - 01</div>
<div class="t cv" style="left:1222px;top:623.2px;line-height:24px;color:#9aa6b2">No next appt.</div>
<div class="t cv" style="left:1393px;top:623.2px;line-height:24px;">Scheduled</div>
<div class="t cv" style="left:1409px;width:300px;text-align:right;top:623.2px;line-height:24px;">$122.00</div>
<div class="t cv" style="left:1580px;width:300px;text-align:right;top:623.2px;line-height:24px;">$12,755.71</div>
<div class="t cv" style="left:1752.6px;width:300px;text-align:right;top:623.2px;line-height:24px;">$100.00</div>
<div class="t cv" style="left:708px;top:712.2px;line-height:24px;">Self</div>
<div class="t cv" style="left:879.6px;top:700.2px;line-height:24px;">04/12/2009 (14y</div>
<div class="t cv" style="left:879.6px;top:725.2px;line-height:24px;">11m )</div>
<div class="t cv" style="left:1051px;top:687.2px;line-height:24px;">03/22/2024-</div>
<div class="t cv" style="left:1051px;top:711.9px;line-height:24px;">SHAHID MALL -</div>
<div class="t cv" style="left:1051px;top:736.9px;line-height:24px;">01</div>
<div class="t cv" style="left:1222px;top:699.2px;line-height:24px;color:#2a9bb0;text-decoration:underline">03/25/2024-</div>
<div class="t cv" style="left:1222px;top:724.5px;line-height:24px;color:#2a9bb0;text-decoration:underline;font-size:17.6px">PAYNE SAR</div>
<div class="t cv" style="left:1393px;top:712.2px;line-height:24px;">Scheduled</div>
<div class="t cv" style="left:1409px;width:300px;text-align:right;top:712.2px;line-height:24px;">$1,322.00</div>
<div class="t cv" style="left:1580.5px;width:300px;text-align:right;top:712.2px;line-height:24px;">$43,864.40</div>
<div class="t cv" style="left:1752.4px;width:300px;text-align:right;top:712.2px;line-height:24px;">$1,224.83</div>
<div class="t cv" style="left:1238px;width:300px;text-align:right;top:788.0px;line-height:24px;font-weight:700;color:#222;font-size:17.4px">Total</div>
<div class="t cv" style="left:1409px;width:300px;text-align:right;top:788.0px;line-height:24px;font-weight:700;color:#222;font-size:18.7px">$1,444.00</div>
<div class="t cv" style="left:1580px;width:300px;text-align:right;top:788.0px;line-height:24px;font-weight:700;color:#222;font-size:18.7px">$56,620.11</div>
<div class="t cv" style="left:1752.6px;width:300px;text-align:right;top:788.0px;line-height:24px;font-weight:700;color:#222;font-size:18.7px">$1,324.83</div>

<div class="a" style="left:1410px;top:845.5px;width:656.5px;height:49px;background:#eef3fb;border-radius:6px"></div>
<div class="a" style="left:1680.5px;top:857px;width:1px;height:26px;background:#cfd7e1"></div>
<div class="t cv" style="left:1423px;top:857.8px;line-height:24px;color:#687888">Account Open Claims</div>
<div class="t cv" style="left:1616.5px;top:857.8px;line-height:24px;color:#687888">:</div>
<div class="t cv" style="left:1640.5px;top:857.8px;line-height:24px;color:#222">42</div>
<div class="t cv" style="left:1700.8px;top:857.8px;line-height:24px;color:#687888;font-size:19px">Total Account Outstanding</div>
<div class="t cv" style="left:1937px;top:857.8px;line-height:24px;color:#687888">:</div>
<div class="t cv" style="left:1960.6px;top:857.8px;line-height:24px;font-weight:700;color:#222;font-size:18.6px">$57,944.94</div>
</body></html>
